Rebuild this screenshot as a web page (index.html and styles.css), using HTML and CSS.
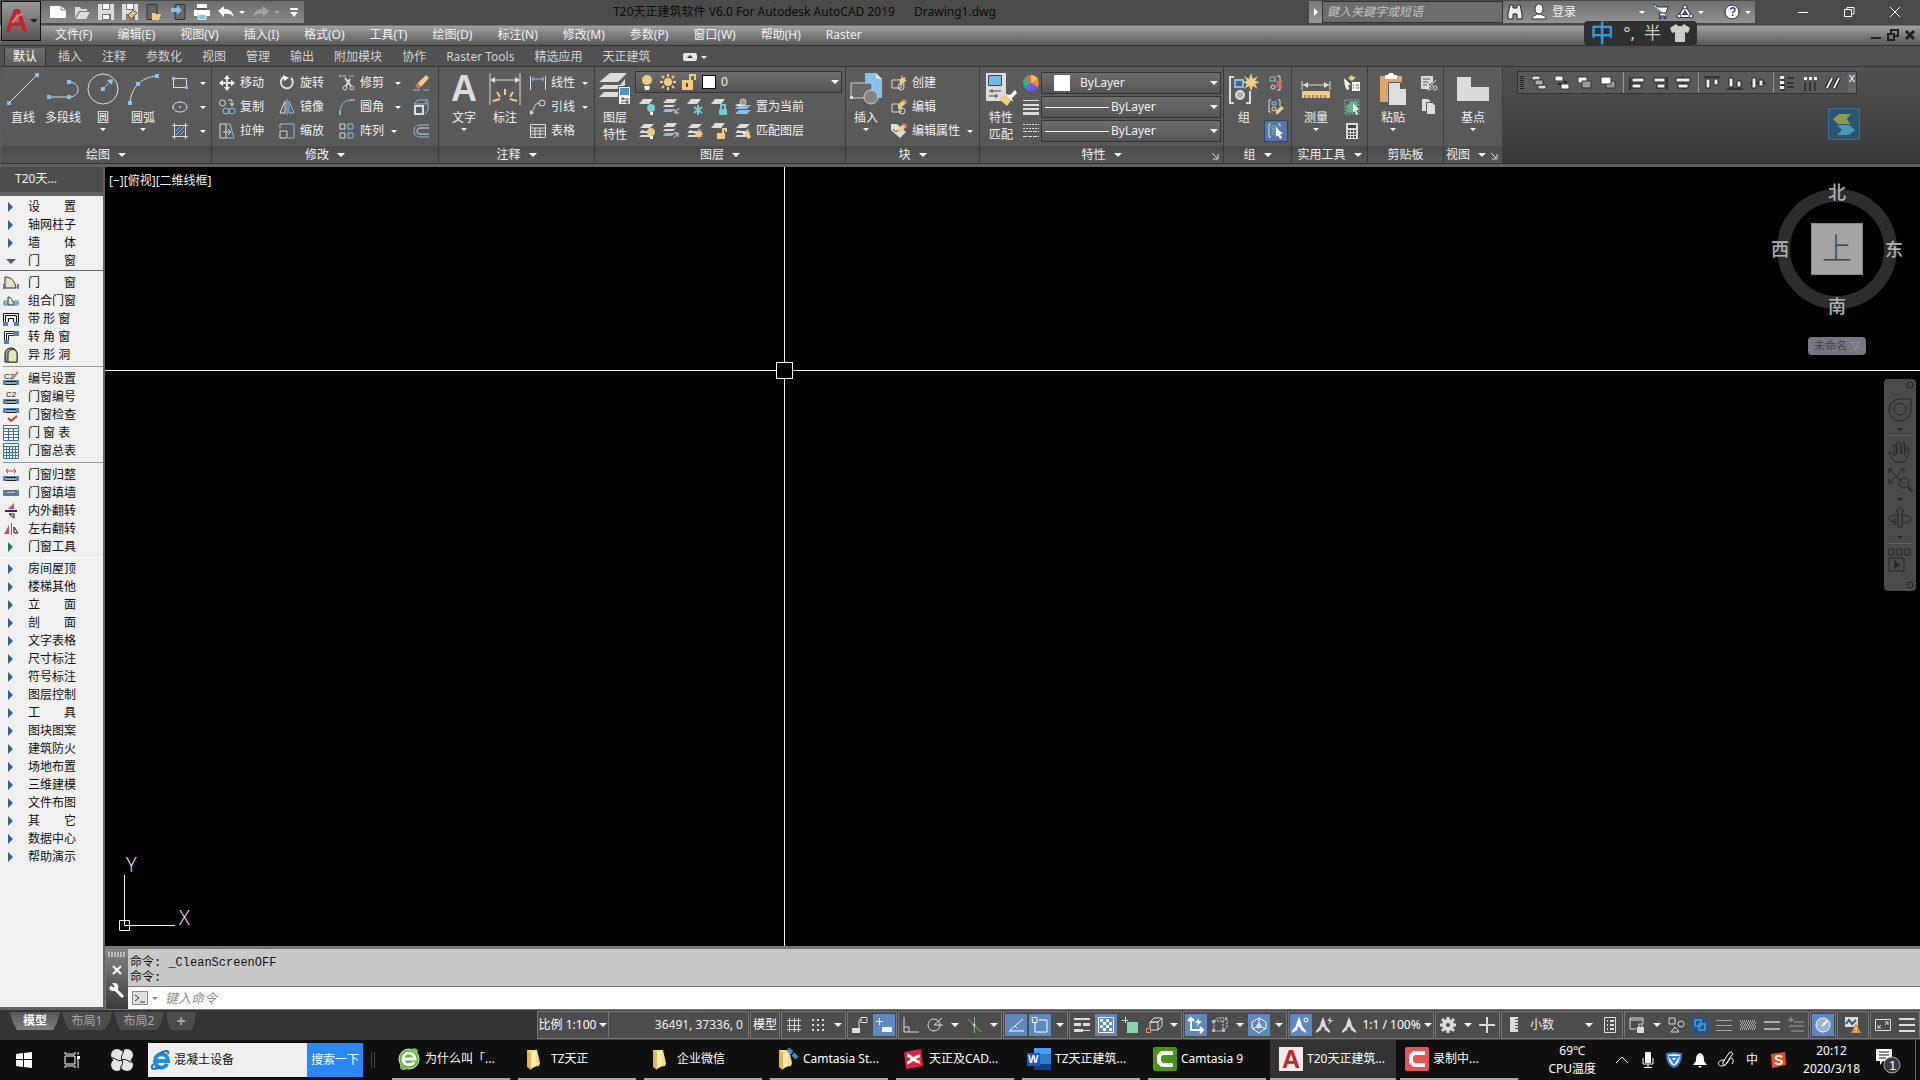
FILE: index.html
```html
<!DOCTYPE html>
<html lang="zh-CN">
<head>
    <meta charset="UTF-8">
    <meta name="viewport" content="width=device-width, initial-scale=1.0">
    <title>T20天正建筑软件 V6.0 For Autodesk AutoCAD 2019</title>
    <link rel="stylesheet" href="styles.css">
</head>
<body>

<!-- Shared shapes -->
<svg class="defs" width="0" height="0">
    <symbol id="layers" viewBox="0 0 16 16"><path class="fw" d="M5 1h10l-4 4H1zM3 7h2l-1 1h7l2-2h1l-4 4H0zM3 11l-1 1h8l3-3h2l-4 5H0z"/></symbol>
    <symbol id="folder" viewBox="0 0 24 24"><path fill="#f9dc83" stroke="none" d="M4 3h10l3 13-1 3-9 1H4z"/><path fill="#e2b753" stroke="none" d="M4 3l4 3v17l-4-3z"/><path fill="#ffedb0" stroke="none" d="M8 6l5-2v15l-5 3z"/></symbol>
    <symbol id="wall" viewBox="0 0 16 6"><path fill="#4f84b5" stroke="none" d="M0 0h16v5H0z"/><path fill="#f0ecb0" stroke="#222" d="M3 1.500h10M3 4.500h10"/><path stroke="#d9d79c" d="M3 3h10"/></symbol>
    <symbol id="person" viewBox="0 0 16 16"><path fill="currentColor" stroke="none" d="M8 0l2 5 1 4 4 5v2l-5-3-1-3H7l-1 3-5 3v-2l4-5 1-4z"/></symbol>
</svg>

<header class="titlebar">
    <button class="app-button" aria-label="应用程序菜单">
        <svg width="26" height="30" viewBox="0 0 26 30"><text class="logo-a" x="1" y="26" font-size="33">A</text><path d="M8 17c5-7 8-9 11-9" stroke="#f27a72" stroke-width="2"/></svg>
        <i class="arr dark"></i>
    </button>
    <div class="quick">
        <button aria-label="新建"><svg class="ic" viewBox="0 0 16 16"><path class="fill" d="M0 2h11l5 4v8H0z"/><path stroke="#777" d="M11 2v4h5"/></svg></button>
        <button aria-label="打开"><svg class="ic" viewBox="0 0 16 16"><path class="fw" d="M1 3h5l1 2h6v2H5L1 14zM6 8h10l-4 7H2z"/></svg></button>
        <button aria-label="保存"><svg class="ic" viewBox="0 0 16 16"><path class="fw" d="M0 0h16v16H0z"/><path fill="#777" stroke="none" d="M4 0h8v6H4zM4 10h9v6H4z"/><path class="fill" d="M5 0h6v5H5zM5 11h6v4H5z"/></svg></button>
        <button aria-label="另存为"><svg class="ic" viewBox="0 0 16 16"><path class="fw" d="M0 0h16v16H0z"/><path fill="#777" stroke="none" d="M4 0h8v6H4zM4 10h9v6H4z"/><path class="fill" d="M5 0h6v5H5z"/><path fill="#f4c070" stroke="#655" d="M6 11l5-5 4 3-6 6z"/><path fill="#e76a66" stroke="none" d="M5 11l3 4-3 1z"/></svg></button>
        <button aria-label="从移动设备打开"><svg class="ic" viewBox="0 0 16 16"><path fill="#666" stroke="#333" d="M1 .5h10v15H1z"/><path class="fy" d="M6 9h3l1 1h5l-2 6H6z"/></svg></button>
        <button aria-label="保存到移动设备"><svg class="ic" viewBox="0 0 16 16"><path fill="#666" stroke="#333" d="M5 .5h10v15H5z"/><path class="fb" d="M1 4h6V1l5 5-5 5V8H1z"/></svg></button>
        <button aria-label="打印"><svg class="ic" viewBox="0 0 16 16"><path class="fill" d="M3 0h10v4H3zM0 6h16v6H0z"/><path fill="#555" stroke="none" d="M3 4h10v2H3z"/><path fill="#7cc3f0" stroke="#eee" d="M4 10.500h8v5H4z"/></svg></button>
        <button class="duo" aria-label="放弃"><svg class="ic" viewBox="0 0 16 16"><path class="fill" d="M0 7l6-5v3c6 0 9 3 10 8-2-3-5-4-10-3v3z"/></svg><i class="arr"></i></button>
        <button class="duo faint" aria-label="重做"><svg class="ic" viewBox="0 0 16 16"><path class="fill" d="M16 7l-6-5v3C4 5 1 8 0 13c2-3 5-4 10-3v3z"/></svg><i class="arr"></i></button>
        <button aria-label="自定义快速访问工具栏"><svg class="ic" viewBox="0 0 16 16"><path class="fill" d="M2 4h8v2H2zM2 8h8l-4 5z"/></svg></button>
    </div>
    <h1>T20天正建筑软件 V6.0 For Autodesk AutoCAD 2019 <span>Drawing1.dwg</span></h1>
    <form class="help-search">
        <button type="button" aria-label="展开"><i class="arr side"></i></button>
        <input type="text" aria-label="搜索" placeholder="鍵入关鍵字或短语">
    </form>
    <div class="account">
        <button aria-label="查找"><svg class="ic" viewBox="0 0 16 16"><path fill="#eee" stroke="#222" d="M3 1h3v3h4V1h3l2 9v5h-5v-5H6v5H1v-5z"/></svg></button>
        <button class="login"><svg class="ic" viewBox="0 0 16 16"><ellipse cx="8" cy="5" rx="4" ry="5" fill="#fff" stroke="#333"/><path fill="#fff" stroke="#333" d="M1 15c0-4 4-3 5-5h4c1 2 5 1 5 5z"/></svg><span>登录</span><i class="arr"></i></button>
        <button aria-label="应用商店"><svg class="ic" viewBox="0 0 16 16"><path fill="#fff" stroke="#1e2c5c" d="M0 1h3l1 2h11l-2 6H6l1 3h7"/><circle cx="7" cy="14" r="1" stroke="#1e2c5c"/><circle cx="12" cy="14" r="1" stroke="#1e2c5c"/></svg></button>
        <button class="duo" aria-label="保持连接"><svg class="ic" viewBox="0 0 16 16"><path d="M8 4l-5 8h10z" stroke="#1e2c5c" stroke-width="4"/><path d="M8 4l-5 8h10z" stroke="#fff" stroke-width="2"/><circle cx="8" cy="3" r="2" fill="#fff" stroke="#1e2c5c"/><circle cx="2" cy="12" r="2" fill="#fff" stroke="#1e2c5c"/><circle cx="14" cy="12" r="2" fill="#fff" stroke="#1e2c5c"/></svg><i class="arr"></i></button>
        <button class="duo help" aria-label="帮助"><svg class="ic" viewBox="0 0 16 16"><circle cx="8" cy="8" r="7" fill="#fff" stroke="#1e2c5c"/><text x="5" y="12" font-size="12" font-weight="bold" fill="#1c4ba0">?</text></svg><i class="arr"></i></button>
    </div>
    <div class="window-buttons">
        <button aria-label="最小化"><svg class="ic" viewBox="0 0 16 16"><path d="M3 8.500h10" stroke="#fff"/></svg></button>
        <button aria-label="还原"><svg class="ic" viewBox="0 0 16 16"><path d="M3.500 5.500h7v7h-7zM6 5V3.500h7V10h-2" stroke="#fff"/></svg></button>
        <button aria-label="关闭"><svg class="ic" viewBox="0 0 16 16"><path d="M3 3l10 10M13 3L3 13" stroke="#fff"/></svg></button>
    </div>
    <div class="ime"><b>中</b><span>°,</span><span>半</span><svg width="20" height="18" viewBox="0 0 20 18"><path fill="#ccc" stroke="none" d="M6 0c2 3 6 3 8 0l6 4-2 5-3-1v10H5V8L2 9 0 4z"/></svg></div>
</header>

<nav class="menubar">
    <a href="#">文件(F)</a><a href="#">编辑(E)</a><a href="#">视图(V)</a><a href="#">插入(I)</a><a href="#">格式(O)</a><a href="#">工具(T)</a><a href="#">绘图(D)</a><a href="#">标注(N)</a><a href="#">修改(M)</a><a href="#">参数(P)</a><a href="#">窗口(W)</a><a href="#">帮助(H)</a><a href="#">Raster</a>
    <div class="doc-buttons">
        <button aria-label="最小化图形"><svg class="ic" viewBox="0 0 16 16"><path d="M3 11h10" stroke="#222" stroke-width="2"/></svg></button>
        <button aria-label="还原图形"><svg class="ic" viewBox="0 0 16 16"><path d="M3 7h6v6H3zM6 6V3h7v6h-3" stroke="#222" stroke-width="2"/></svg></button>
        <button aria-label="关闭图形"><svg class="ic" viewBox="0 0 16 16"><path d="M4 4l8 8M12 4l-8 8" stroke="#222" stroke-width="3"/></svg></button>
    </div>
</nav>

<nav class="tabs">
    <a href="#" class="active">默认</a><a href="#">插入</a><a href="#">注释</a><a href="#">参数化</a><a href="#">视图</a><a href="#">管理</a><a href="#">输出</a><a href="#">附加模块</a><a href="#">协作</a><a href="#">Raster Tools</a><a href="#">精选应用</a><a href="#">天正建筑</a>
    <button class="minimize" aria-label="最小化功能区"><svg width="14" height="10" viewBox="0 0 14 10"><rect x="0" y="1" width="14" height="8" rx="2" fill="#e6e6e6" stroke="none"/><path fill="#333" stroke="none" d="M4 6l3-3 3 3z"/></svg><i class="arr"></i></button>
</nav>

<div class="ribbon">
    <section class="panel draw">
        <div class="panel-body">
            <button class="big"><svg viewBox="0 0 32 32"><path d="M1 31L31 1"/><path class="fb" d="M0 28h4v4H0zM28 0h4v4h-4z"/></svg><span>直线</span></button>
            <button class="big"><svg viewBox="0 0 32 32"><path d="M2 24h20c12 0 12-15 0-15"/><path class="fb" d="M0 22h4v4H0zM20 22h4v4h-4zM20 7h4v4h-4z"/></svg><span>多段线</span></button>
            <button class="big"><svg viewBox="0 0 32 32"><circle cx="16" cy="16" r="15"/><path class="bl" d="M16 16l8-8"/><path class="fb" d="M14 14h4v4h-4zM26 6l-1 6-5-5z"/></svg><span>圆</span><i class="arr"></i></button>
            <button class="big"><svg viewBox="0 0 32 32"><path d="M3 30C4 15 14 4 30 3"/><path class="fb" d="M1 28h4v4H1zM9 9h4v4H9zM28 1h4v4h-4z"/></svg><span>圆弧</span><i class="arr"></i></button>
            <div class="stack">
                <button class="cmd" aria-label="矩形"><svg class="ic" viewBox="0 0 16 16"><path d="M1.500 3.500h13v9h-13z"/><path class="fb" d="M0 2h3v3H0zM13 11h3v3h-3z"/></svg><i class="arr"></i></button>
                <button class="cmd" aria-label="椭圆"><svg class="ic" viewBox="0 0 16 16"><ellipse cx="8" cy="8" rx="7" ry="5"/><path class="fb" d="M7 7h2v2H7zM0 7h2v3H0zM7 2h2v2H7z"/></svg><i class="arr"></i></button>
                <button class="cmd" aria-label="图案填充"><svg class="ic" viewBox="0 0 16 16"><path d="M2.500 0v16M13.500 0v16M0 2.500h16M0 13.500h16"/><path class="bl" d="M4 8l4-4M4 12l8-8M8 12l4-4"/></svg><i class="arr"></i></button>
            </div>
        </div>
        <h2>绘图 <i class="arr wide"></i></h2>
    </section>

    <section class="panel modify">
        <div class="panel-body">
            <div class="stack">
                <button class="cmd"><svg class="ic" viewBox="0 0 16 16"><path stroke-width="2" d="M8 2v12M2 8h12"/><path class="fill" d="M8 0l3 4H5zM8 16l3-4H5zM0 8l4-3v6zM16 8l-4-3v6z"/></svg><span>移动</span></button>
                <button class="cmd"><svg class="ic" viewBox="0 0 16 16"><circle cx="3.500" cy="4" r="3"/><path d="M9 1h4v5M11 4l2 3 2-3"/><circle class="bl" cx="7" cy="12" r="3"/><circle class="bl" cx="13" cy="12" r="3"/></svg><span>复制</span></button>
                <button class="cmd"><svg class="ic" viewBox="0 0 16 16"><path d="M1 1h6v14H1zM4 9h8M9 6l3 3-3 3"/><path class="bl" d="M7 1h4l4 14H7"/></svg><span>拉伸</span></button>
            </div>
            <div class="stack">
                <button class="cmd"><svg class="ic" viewBox="0 0 16 16"><path stroke-width="2" d="M12 3a6 6 0 1 1-7-1"/><path class="fill" d="M4 0l6 3-5 3z"/></svg><span>旋转</span></button>
                <button class="cmd"><svg class="ic" viewBox="0 0 16 16"><path d="M6 2v12H1z"/><path class="bl" d="M10 2v12h5zM8 0v16"/></svg><span>镜像</span></button>
                <button class="cmd"><svg class="ic" viewBox="0 0 16 16"><path class="bl" d="M1 6V1h14v14H9"/><path d="M1 8h7v7H1z"/></svg><span>缩放</span></button>
            </div>
            <div class="stack">
                <button class="cmd"><svg class="ic" viewBox="0 0 16 16"><path stroke-dasharray="3 1" d="M0 1h7"/><path class="bl" d="M10 1h5"/><path stroke-width="2" d="M6 3l6 8M11 4l-4 7"/><circle cx="6" cy="13" r="2"/><circle cx="13" cy="13" r="2"/></svg><span>修剪</span><i class="arr"></i></button>
                <button class="cmd"><svg class="ic" viewBox="0 0 16 16"><path class="bl" d="M1 15c0-8 3-13 10-14"/><path d="M11 1h5M1 12v4"/></svg><span>圆角</span><i class="arr"></i></button>
                <button class="cmd array"><svg class="ic" viewBox="0 0 16 16"><path d="M1 1h5v5H1zM1 10h5v5H1z"/><path class="bl" d="M9 1h5v5H9zM9 10h5v5H9z"/></svg><span>阵列</span><i class="arr"></i></button>
            </div>
            <div class="stack">
                <button class="cmd" aria-label="删除"><svg class="ic" viewBox="0 0 16 16"><path class="fy" d="M4 9l9-9 3 3-8 9z"/><path class="fr" d="M2 11l3-3 3 4-3 2z"/><path class="bl" d="M0 15h7M10 15h6"/></svg></button>
                <button class="cmd" aria-label="分解"><svg class="ic" viewBox="0 0 16 16"><path stroke-width="2" d="M2 7h8v8H2z"/><path class="bl" d="M1 5l4-4h10L11 5zM12 6l3-3v8l-3 4"/></svg></button>
                <button class="cmd" aria-label="偏移"><svg class="ic" viewBox="0 0 16 16"><path class="bl" d="M16 2H7C-1 2-1 14 7 14h9"/><path d="M16 5H7c-4 0-4 6 0 6h9"/></svg></button>
            </div>
        </div>
        <h2>修改 <i class="arr wide"></i></h2>
    </section>

    <section class="panel annotate">
        <div class="panel-body">
            <button class="big"><svg viewBox="0 0 32 32"><text class="letter" x="3" y="28" font-size="36">A</text></svg><span>文字</span><i class="arr"></i></button>
            <button class="big"><svg viewBox="0 0 32 32"><path d="M1 0v32M31 0v32M2 7h28"/><path class="fw" d="M1 7l5-3v6zM31 7l-5-3v6z"/><path stroke="#f4cd7a" stroke-width="2" d="M16 16v6M8 19l3 5M24 19l-3 5M4 28l7-2M28 28l-7-2"/></svg><span>标注</span></button>
            <div class="stack">
                <button class="cmd"><svg class="ic" viewBox="0 0 16 16"><path d="M.5 1v14M15.500 1v14"/><path class="bl" d="M2 4h12M4 2L2 4l2 2M12 2l2 2-2 2"/></svg><span>线性</span><i class="arr"></i></button>
                <button class="cmd"><svg class="ic" viewBox="0 0 16 16"><circle cx="12" cy="4" r="3"/><path d="M9 4C4 4 5 10 1 14"/><path class="fw" d="M0 16v-5l4 3z"/></svg><span>引线</span><i class="arr"></i></button>
                <button class="cmd"><svg class="ic" viewBox="0 0 16 16"><path d="M.5 1.500h15v13H.5zM0 5h16M0 8h16M0 11h16M5 5v10M10 5v10"/></svg><span>表格</span></button>
            </div>
        </div>
        <h2>注释 <i class="arr wide"></i></h2>
    </section>

    <section class="panel layer">
        <div class="panel-body">
            <button class="big"><svg viewBox="0 0 32 32"><path class="fw" d="M11 0h17l-9 9H0zM5 12h16l5-6v6l-5 4H0zM5 19h14v5H0z"/><path fill="#fff" stroke="#555" d="M19.500 13.500h12v18h-12z"/><path fill="#4b93cc" stroke="none" d="M21 15h9v7h-9z"/><path stroke="#444" d="M22 26h8M22 29h8M24 24v3M28 27v4"/></svg><span>图层<br>特性</span></button>
            <div class="layer-tools">
                <div class="combo">
                    <svg class="ic" viewBox="0 0 16 16"><circle cx="8" cy="6" r="5" class="fy"/><path class="fill" d="M5 12h6l-1 4H6z"/></svg>
                    <svg class="ic" viewBox="0 0 16 16"><circle cx="8" cy="8" r="4" class="fy"/><path stroke="#f4cd7a" stroke-width="2" d="M8 0v3M8 13v3M0 8h3M13 8h3M2 2l2 2M12 12l2 2M14 2l-2 2M4 12l-2 2"/></svg>
                    <svg class="ic" viewBox="0 0 16 16"><path class="fy" d="M1 6h11v10H1z"/><path stroke="#f4cd7a" stroke-width="2" d="M9 6V1h5v5"/><path stroke="#733" stroke-width="2" d="M6 9v4"/></svg>
                    <i class="swatch"></i>
                    <select aria-label="图层"><option>0</option></select>
                    <i class="arr wide"></i>
                </div>
                <div class="layer-row">
                    <button aria-label="关"><svg class="ic" viewBox="0 0 16 16"><path class="fw" d="M4 0h10l-4 5H0z"/><circle class="ft" cx="12" cy="9" r="4"/><path class="fill" d="M11 13h3v3h-3z"/></svg></button>
                    <button aria-label="隔离"><svg class="ic" viewBox="0 0 16 16"><path class="fw" d="M4 0h10l-3 4H0zM2 6h9l2-1-3 3H0z"/><path class="fb" d="M2 10h10l-3 3H0z"/><path d="M16 9l-4 5M12 10v4h4"/></svg></button>
                    <button aria-label="冻结"><svg class="ic" viewBox="0 0 16 16"><path class="fw" d="M4 0h10l-4 5H0z"/><path stroke="#6cd0d2" stroke-width="2" d="M11 6v10M7 8l8 6M15 8l-8 6"/></svg></button>
                    <button aria-label="锁定"><svg class="ic" viewBox="0 0 16 16"><path class="fw" d="M4 0h10l-4 5H0z"/><path class="ft" d="M8 10h8v6H8z"/><path stroke="#6cd0d2" stroke-width="2" d="M10 10V6h4v4"/></svg></button>
                    <button class="cmd"><svg class="ic" viewBox="0 0 16 16"><path class="fb" d="M4 6h12l-4 4H0zM4 11h12l-4 4H0z"/><path class="fw" d="M2 5h9l-2 2H0z"/><circle cx="8" cy="3" r="3" fill="#999" stroke="#ccc"/></svg><span>置为当前</span></button>
                </div>
                <div class="layer-row">
                    <button aria-label="打开所有图层"><svg class="ic" viewBox="0 0 16 16"><use href="#layers"/><circle class="fy" cx="12" cy="9" r="4"/><path class="fill" d="M11 13h3v3h-3z"/></svg></button>
                    <button aria-label="取消隔离"><svg class="ic" viewBox="0 0 16 16"><path class="fw" d="M4 0h10l-3 4H0zM2 6h9l2-1-3 3H0z"/><path class="fb" d="M2 10h10l-3 3H0z"/><path d="M11 15l4-5M11 10h4v4"/></svg></button>
                    <button aria-label="解冻所有图层"><svg class="ic" viewBox="0 0 16 16"><use href="#layers"/><circle cx="12" cy="11" r="3" class="fy"/><path stroke="#f4cd7a" d="M12 6v10M7 11h9M9 8l6 6M15 8l-6 6"/></svg></button>
                    <button aria-label="解锁"><svg class="ic" viewBox="0 0 16 16"><path class="fw" d="M4 0h10l-4 5H0z"/><path class="fy" d="M6 10h8v6H6z"/><path stroke="#f4cd7a" stroke-width="2" d="M12 10V6h3v3"/></svg></button>
                    <button class="cmd"><svg class="ic" viewBox="0 0 16 16"><use href="#layers"/><path class="fy" d="M9 9l4-2 3 7-3 2z"/><path fill="#fff" stroke="none" d="M8 8l3 3-2 1-3-3z"/></svg><span>匹配图层</span></button>
                </div>
            </div>
        </div>
        <h2>图层 <i class="arr wide"></i></h2>
    </section>

    <section class="panel block">
        <div class="panel-body">
            <button class="big"><svg viewBox="0 0 32 32"><path class="fb" d="M15 0h11l6 6v19H15z"/><path fill="#cde6fa" stroke="none" d="M26 0v6h6z"/><path fill="#686868" stroke="#ccc" d="M1 10h21v15H1z"/><circle cx="21" cy="24" r="7" fill="#868686" stroke="#ccc"/><path class="fw" d="M0 23h3v3H0z"/></svg><span>插入</span><i class="arr"></i></button>
            <div class="stack">
                <button class="cmd"><svg class="ic" viewBox="0 0 16 16"><path d="M1 5h9v8H1z"/><circle cx="10" cy="12" r="3"/><path class="fy" d="M11 0l1 3 3-1-1 3 2 1-3 1 1 3-3-2-3 1 1-3-2-2 3 0z"/></svg><span>创建</span></button>
                <button class="cmd"><svg class="ic" viewBox="0 0 16 16"><path d="M1 5h9v8H1z"/><circle cx="11" cy="12" r="3"/><path class="fy" d="M7 6l6-6 3 3-6 6-3 1z"/><path class="fr" d="M13 0l3 3-2 1-3-3z"/></svg><span>编辑</span></button>
                <button class="cmd"><svg class="ic" viewBox="0 0 16 16"><path class="fw" d="M0 1h6l9 8-6 6L0 7z"/><path stroke="#555" d="M2 6l3 3 4-4"/><path class="fy" d="M7 6l6-6 3 3-6 6-3 1z"/><path class="fr" d="M13 0l3 3-2 1-3-3z"/></svg><span>编辑属性</span><i class="arr"></i></button>
            </div>
        </div>
        <h2>块 <i class="arr wide"></i></h2>
    </section>

    <section class="panel props">
        <div class="panel-body">
            <button class="big"><svg viewBox="0 0 32 32"><path class="fw" d="M1 0h20v28H1z"/><path fill="#71b7e8" stroke="#444" d="M3.500 2.500h13v10h-13z"/><path stroke="#444" d="M4 18h12M4 23h9M7 16v4M11 21v4"/><path class="fy" d="M14 26l6-5 7 5-5 7z"/><path class="fill" d="M20 21l5 1 5-5 2 3-5 5 1 4z"/></svg><span>特性<br>匹配</span></button>
            <div class="stack icons">
                <i class="color-wheel"></i>
                <svg class="ic" viewBox="0 0 16 16"><path class="fw" d="M0 1h16v1H0zM0 5h16v2H0zM0 9h16v2H0zM0 13h16v3H0z"/></svg>
                <svg class="ic" viewBox="0 0 16 16"><path stroke-dasharray="2 1" d="M0 1.500h16M0 5.500h16"/><path stroke-dasharray="4 1" d="M0 8.500h16M0 13.500h16"/></svg>
            </div>
            <div class="stack combos">
                <div class="combo color"><i class="swatch"></i><select aria-label="对象颜色"><option>ByLayer</option></select><i class="arr wide"></i></div>
                <div class="combo"><i class="rule"></i><select aria-label="线宽"><option>ByLayer</option></select><i class="arr wide"></i></div>
                <div class="combo"><i class="rule"></i><select aria-label="线型"><option>ByLayer</option></select><i class="arr wide"></i></div>
            </div>
        </div>
        <h2>特性 <i class="arr wide"></i><svg class="launcher" viewBox="0 0 8 8"><path d="M1 1l5 5M7 2v5H2"/></svg></h2>
    </section>

    <section class="panel group">
        <div class="panel-body">
            <button class="big"><svg viewBox="0 0 32 32"><path stroke-width="2" d="M6 4H2v26h4M18 30h4V18"/><path fill="#47687f" stroke="#7db9e8" stroke-width="2" d="M7 7h8v7H7z"/><circle cx="12" cy="22" r="4" fill="#aaa" stroke-width="2"/><path class="fy" d="M23 0l2 6 5-3-3 5 5 1-5 2 3 5-5-3-2 5-2-5-5 3 3-5-5-2 5-1-3-5 5 3z"/></svg><span>组</span></button>
            <div class="stack">
                <button class="tool" aria-label="解除编组"><svg class="ic" viewBox="0 0 16 16"><path class="bl" d="M2 2h5v4H2z"/><circle cx="5" cy="12" r="2"/><path d="M9 1h3v14H9"/><path stroke="#ee5a55" stroke-width="2" d="M8 6l6 6M14 6l-6 6"/></svg></button>
                <button class="tool" aria-label="组编辑"><svg class="ic" viewBox="0 0 16 16"><path d="M3 1H1v12h2M10 1h2v6"/><path class="bl" d="M4 3h4v3H4z"/><circle cx="6" cy="10" r="2"/><path class="fy" d="M8 12l5-5 3 2-5 5-3 2z"/></svg></button>
                <button class="tool on" aria-label="启用编组选择"><svg class="ic" viewBox="0 0 16 16"><path d="M3 1H1v13h2M10 1h2v3"/><path stroke="#67c69b" d="M4 3h4v3H4z"/><circle stroke="#67c69b" cx="6" cy="10" r="2"/><path class="fill" d="M8 4l7 7h-3l2 4-2 1-2-4-2 2z"/></svg></button>
            </div>
        </div>
        <h2>组 <i class="arr wide"></i></h2>
    </section>

    <section class="panel utils">
        <div class="panel-body">
            <button class="big"><svg viewBox="0 0 32 32"><path d="M2 8v9M30 8v9M3 12h26"/><path class="fw" d="M3 12l5-3v6zM29 12l-5-3v6z"/><path class="fy" d="M2 18h28v7H2z"/><path stroke="#555" d="M5 22v3M9 22v3M13 22v3M17 22v3M21 22v3M25 22v3"/></svg><span>测量</span><i class="arr"></i></button>
            <div class="stack">
                <button class="tool" aria-label="快速选择"><svg class="ic" viewBox="0 0 16 16"><path class="fill" d="M0 3l7 7H4l1 4-2 1-2-4zM8 7h8v9H8z"/><path class="fy" d="M8 0l1 2h3l-4 4-4-3z"/><path stroke="#256ea8" d="M9 10h1M12 10h3M9 13h1M12 13h3"/></svg></button>
                <button class="tool" aria-label="全部选择"><svg class="ic" viewBox="0 0 16 16"><path stroke="#67c69b" stroke-dasharray="2 1" d="M1 1h14v14H1z"/><path fill="#67a884" stroke="#67c69b" d="M3 6h7v7H3zM6 3h7v7H6z"/><path class="fill" d="M9 4l6 7h-3l2 4-2 1-1-4-2 1z"/></svg></button>
                <button class="tool" aria-label="计算器"><svg class="ic" viewBox="0 0 16 16"><path class="fw" d="M2 0h12v16H2z"/><path fill="#444" stroke="none" d="M4 2h8v3H4zM4 7h2v2H4zM7 7h2v2H7zM10 7h2v2h-2zM4 10h2v2H4zM7 10h2v2H7zM10 10h2v2h-2zM4 13h2v2H4zM7 13h2v2H7zM10 13h2v2h-2z"/></svg></button>
            </div>
        </div>
        <h2>实用工具 <i class="arr wide"></i></h2>
    </section>

    <section class="panel clip">
        <div class="panel-body">
            <button class="big"><svg viewBox="0 0 32 32"><path fill="#dca66b" stroke="none" d="M3 3h22v26H3z"/><path class="fill" d="M8 2h3l1-2h4l1 2h3v4H8z"/><path fill="#ddd" stroke="#5b5b5b" d="M11.500 9.500h12l6 6v17h-18z"/><path fill="#5b5b5b" stroke="none" d="M23 9v7h7z"/></svg><span>粘贴</span><i class="arr"></i></button>
            <div class="stack">
                <button class="tool" aria-label="剪切"><svg class="ic" viewBox="0 0 16 16"><path class="fw" d="M0 1h12v6l-4 2v5H0z"/><path stroke="#555" d="M2 4h7M2 7h6M2 10h4"/><path d="M6 5l7 7M15 5l-7 7"/><circle cx="8" cy="13" r="2"/><circle cx="14" cy="13" r="2"/></svg></button>
                <button class="tool" aria-label="复制剪裁"><svg class="ic" viewBox="0 0 16 16"><path class="fw" d="M1 0h6l2 2v2H5v8H1z"/><path fill="#ddd" stroke="#5b5b5b" d="M5.500 3.500h6l3 3v9h-9z"/></svg></button>
            </div>
        </div>
        <h2>剪贴板</h2>
    </section>

    <section class="panel view">
        <div class="panel-body">
            <button class="big"><svg viewBox="0 0 32 32"><path class="fw" d="M0 4h14v10h18v14H0z"/></svg><span>基点</span><i class="arr"></i></button>
        </div>
        <h2>视图 <i class="arr wide"></i><svg class="launcher" viewBox="0 0 8 8"><path d="M1 1l5 5M7 2v5H2"/></svg></h2>
    </section>

    <div class="ribbon-rest">
        <div class="align-bar">
            <i class="grip"></i>
            <button aria-label="前置"><svg class="ic" viewBox="0 0 16 16"><path fill="#ddd" stroke="#333" d="M1 1h8v4H1zM7 10h8v4H7z"/><path fill="#aaa" stroke="#333" d="M4 5h8v5H4z"/></svg></button>
            <button aria-label="后置"><svg class="ic" viewBox="0 0 16 16"><path fill="#fff" stroke="#333" d="M1 1h8v5H1zM7 9h8v5H7z"/><path fill="#222" stroke="none" d="M4 8h3v2H4zM10 6h3v2h-3z"/></svg></button>
            <button aria-label="置于对象之上"><svg class="ic" viewBox="0 0 16 16"><path fill="#fff" stroke="#333" d="M1 2h9v6H1z"/><path fill="#999" stroke="#333" d="M5 6h9v7H5z"/></svg></button>
            <button aria-label="置于对象之下"><svg class="ic" viewBox="0 0 16 16"><path fill="#999" stroke="#333" d="M6 6h9v7H6z"/><path fill="#fff" stroke="#333" d="M1 2h10v7H1z"/></svg></button>
            <button class="sep" aria-label="左对齐"><svg class="ic" viewBox="0 0 16 16"><path stroke="#111" d="M1 2v13"/><path fill="#eee" stroke="#222" d="M3 3h12v4H3zM3 9h9v4H3z"/></svg></button>
            <button aria-label="右对齐"><svg class="ic" viewBox="0 0 16 16"><path stroke="#111" d="M15 2v13"/><path fill="#eee" stroke="#222" d="M2 3h11v4H2zM5 9h8v4H5z"/></svg></button>
            <button aria-label="水平居中"><svg class="ic" viewBox="0 0 16 16"><path stroke="#111" d="M8 1v14"/><path fill="#eee" stroke="#222" d="M1 3h14v4H1zM3 9h10v4H3z"/></svg></button>
            <button class="sep" aria-label="顶端对齐"><svg class="ic" viewBox="0 0 16 16"><path stroke="#111" d="M0 2h16"/><path fill="#eee" stroke="#222" d="M2 4h4v9H2zM10 4h4v6h-4z"/></svg></button>
            <button aria-label="底端对齐"><svg class="ic" viewBox="0 0 16 16"><path stroke="#111" d="M0 14h16"/><path fill="#eee" stroke="#222" d="M2 3h4v9H2zM10 6h4v6h-4z"/></svg></button>
            <button aria-label="垂直居中"><svg class="ic" viewBox="0 0 16 16"><path stroke="#111" d="M0 8h16"/><path fill="#eee" stroke="#222" d="M2 3h4v10H2zM9 5h4v6H9z"/></svg></button>
            <button class="sep" aria-label="纵向分布"><svg class="ic" viewBox="0 0 16 16"><path fill="#eee" stroke="none" d="M1 1h4v3H1zM1 6h4v3H1zM1 11h4v3H1z"/><path stroke="#111" d="M2 5h4M2 10h4M2 15h4M8 3h7M8 8h7M8 12h7"/></svg></button>
            <button aria-label="横向分布"><svg class="ic" viewBox="0 0 16 16"><path fill="#eee" stroke="none" d="M2 2h3v3H2zM7 2h3v3H7zM12 2h3v3h-3z"/><path stroke="#111" d="M3 7v9M8 7v9M13 7v9"/></svg></button>
            <button aria-label="平行"><svg class="ic" viewBox="0 0 16 16"><path stroke="#111" stroke-width="4" d="M2 13L7 3M9 13l5-10"/><path stroke="#eee" stroke-width="2" d="M2 13L7 3M9 13l5-10"/></svg></button>
            <button class="close" aria-label="关闭工具栏">x</button>
        </div>
        <svg class="s-logo" viewBox="0 0 32 32"><path fill="#2a5674" stroke="#3a7193" d="M.5.5h31v31H.5z"/><path fill="#8c9c45" stroke="none" d="M11 6h12l-4 5 3 5H10l-5-5z"/><path fill="#4b97b8" stroke="none" d="M9 17h12l6 5-6 5H9l5-5z"/></svg>
    </div>
</div>

<div class="workspace">
    <aside class="palette">
        <h2>T20天...</h2>
        <div class="menu-list">
            <a href="#"><i class="tri"></i>设　　置</a>
            <a href="#"><i class="tri"></i>轴网柱子</a>
            <a href="#"><i class="tri"></i>墙　　体</a>
            <a href="#" class="open"><i class="tri down"></i>门　　窗</a>
            <a href="#" class="after-open"><svg class="ic" viewBox="0 0 16 16"><path fill="#e8e5b5" stroke="#234" d="M2 13V2c7 0 10 5 11 11z"/><path fill="#4f84b5" stroke="none" d="M0 9h2v5H0zM14 9h2v5h-2z"/></svg>门　　窗</a>
            <a href="#"><svg class="ic" viewBox="0 0 16 16"><path fill="#e8e5b5" stroke="#234" d="M5 12V4c3 0 5 4 6 8z"/><path stroke="#3a79aa" d="M1 8h4v4H1zM11 8h4v4h-4zM1 10h4M11 10h4"/></svg>组合门窗</a>
            <a href="#"><svg class="ic" viewBox="0 0 16 16"><path stroke="#111" d="M.5 11V2.500h15V11M2.500 11V4.500h11V11M5.500 11V7.500h5V11"/><path fill="#4f84b5" stroke="none" d="M0 11h5v4H0zM11 11h5v4h-5z"/></svg>带 形 窗</a>
            <a href="#"><svg class="ic" viewBox="0 0 16 16"><path stroke="#222" d="M1.500 11V2.500H12M3.500 11V4.500H12M5.500 11V6.500H12"/><path fill="#4f84b5" stroke="none" d="M11 2h5v5h-5zM1 11h5v4H1z"/></svg>转 角 窗</a>
            <a href="#"><svg class="ic" viewBox="0 0 16 16"><path fill="#999" stroke="#111" d="M2 15V7c0-8 12-8 12 0v8z"/><path fill="#e8e5b5" stroke="#333" d="M5 15V7c0-6 9-6 9 0v8z"/></svg>异 形 洞</a>
            <hr>
            <a href="#"><svg class="ic" viewBox="0 0 16 16"><text x="1" y="8" font-size="8" fill="#111">C2</text><path stroke="#b09030" stroke-width="2" d="M15 1l-5 6"/><use href="#wall" y="9" width="16" height="6"/></svg>编号设置</a>
            <a href="#"><svg class="ic" viewBox="0 0 16 16"><text x="3" y="8" font-size="8" fill="#111">C2</text><use href="#wall" y="10" width="16" height="6"/></svg>门窗编号</a>
            <a href="#"><svg class="ic" viewBox="0 0 16 16"><use href="#wall" y="1" width="16" height="6"/><path stroke="#d03a25" stroke-width="2" d="M5 11l3 3 6-5"/></svg>门窗检查</a>
            <a href="#"><svg class="ic" viewBox="0 0 16 16"><path fill="#fff" stroke="#3b71ad" d="M.5.5h15v15H.5zM0 3.500h16M0 6.500h16M0 9.500h16M0 12.500h16M5.500 3v13M10.500 3v13"/></svg>门 窗 表</a>
            <a href="#"><svg class="ic" viewBox="0 0 16 16"><path fill="#fff" stroke="#3b71ad" d="M.5.5h15v15H.5zM0 3.500h16M0 6.500h16M0 9.500h16M0 12.500h16M3.500 3v13M6.500 3v13M9.500 3v13M12.500 3v13"/></svg>门窗总表</a>
            <hr>
            <a href="#"><svg class="ic" viewBox="0 0 16 16"><path stroke="#d03a25" d="M3 4h10M5 2L3 4l2 2M11 2l2 2-2 2"/><use href="#wall" y="9" width="16" height="6"/></svg>门窗归整</a>
            <a href="#"><svg class="ic" viewBox="0 0 16 16"><path fill="#4f84b5" stroke="none" d="M0 5h16v6H0z"/><path fill="#a9b3c9" stroke="#555" d="M3 6h10v3H3z"/></svg>门窗填墙</a>
            <a href="#"><svg class="ic" viewBox="0 0 16 16"><path fill="#e04a4f" stroke="none" d="M11 0v6H5z"/><path stroke="#3c1c9c" stroke-width="2" d="M2 8h12"/><path stroke="#111" d="M6 11h5v4z"/></svg>内外翻转</a>
            <a href="#"><svg class="ic" viewBox="0 0 16 16"><path fill="#e04a4f" stroke="none" d="M6 4v9H1z"/><path stroke="#4d6fb2" d="M8.500 2v12"/><path stroke="#111" d="M11 6v6h4z"/></svg>左右翻转</a>
            <a href="#"><i class="tri green"></i>门窗工具</a>
            <hr class="light">
            <a href="#"><i class="tri"></i>房间屋顶</a>
            <a href="#"><i class="tri"></i>楼梯其他</a>
            <a href="#"><i class="tri"></i>立　　面</a>
            <a href="#"><i class="tri"></i>剖　　面</a>
            <a href="#"><i class="tri"></i>文字表格</a>
            <a href="#"><i class="tri"></i>尺寸标注</a>
            <a href="#"><i class="tri"></i>符号标注</a>
            <a href="#"><i class="tri"></i>图层控制</a>
            <a href="#"><i class="tri"></i>工　　具</a>
            <a href="#"><i class="tri"></i>图块图案</a>
            <a href="#"><i class="tri"></i>建筑防火</a>
            <a href="#"><i class="tri"></i>场地布置</a>
            <a href="#"><i class="tri"></i>三维建模</a>
            <a href="#"><i class="tri"></i>文件布图</a>
            <a href="#"><i class="tri"></i>其　　它</a>
            <a href="#"><i class="tri"></i>数据中心</a>
            <a href="#"><i class="tri"></i>帮助演示</a>
        </div>
    </aside>

    <main>
        <div class="canvas">
            <p class="view-label">[−][俯视][二维线框]</p>
            <i class="cross-v"></i><i class="cross-h"></i><i class="pickbox"></i>
            <svg class="ucs" width="90" height="80" viewBox="0 0 90 80"><path d="M15.500 20v50.500H66M10.500 65.500h10v10h-10z"/><text x="17" y="17" font-size="20">Y</text><text x="70" y="70" font-size="20">X</text></svg>
            <div class="viewcube">
                <i class="ring"></i>
                <span class="north">北</span><span class="west">西</span><b>上</b><span class="east">东</span><span class="south">南</span>
            </div>
            <button class="ucs-name">未命名 <i>▽</i></button>
            <div class="navbar">
                <svg viewBox="0 0 32 212"><circle cx="26" cy="6" r="3"/><circle cx="26" cy="206" r="3"/><path d="M16 20h11v10a11 11 0 1 1-11-10z"/><circle cx="16" cy="30" r="6"/><path stroke="#666" d="M4 56.500h24M4 164.500h24"/><path class="fk" d="M13 49h6l-3 3zM13 119h6l-3 3zM13 157h6l-3 3z"/><path d="M11 83c-3-5-7-8-6-10s5 3 6 4l-2-11c1-2 3-1 3 1l1 8V63c1-2 3-1 3 0l1 12 2-11c1-1 3 0 2 2l-1 10 3-7c1-2 3 0 2 1-2 9-4 14-6 13z"/><path d="M5 90l14 14M20 90L5 104M5 94v-4h4M16 90h4v4M5 100v4h4"/><circle cx="20" cy="104" r="5"/><path stroke-width="2" d="M24 108l4 4"/><path d="M14 148v-16h-2l4-4 4 4h-2v16zM14 136c-6 0-9 2-9 4s4 3 8 3M18 136c5 0 9 2 9 4s-4 4-8 4M12 140l-4 3 4 3M5 170h5v6H5zM13 170h5v6h-5zM21 170h5v6h-5zM5 179h15v13H5z"/><path class="fk" d="M10 181v9l6-4z"/></svg>
            </div>
        </div>
        <div class="command">
            <div class="command-side">
                <i class="dots"></i>
                <button aria-label="关闭命令行"><svg class="ic" viewBox="0 0 16 16"><path stroke="#fff" stroke-width="2" d="M4 4l8 8M12 4l-8 8"/></svg></button>
                <button aria-label="自定义"><svg class="ic" viewBox="0 0 16 16"><path stroke="#fff" stroke-width="3" d="M5 5l9 9"/><path stroke="#fff" stroke-width="2" d="M2 4l3 2 2-2-2-3c5 0 4 6 0 6S1 5 2 4z"/></svg></button>
            </div>
            <div class="command-main">
                <p>命令: _CleanScreenOFF<br>命令:</p>
                <div class="command-line">
                    <button aria-label="最近使用的命令"><svg class="ic" viewBox="0 0 16 16"><path fill="#dde0e4" stroke="#888" d="M.5 1.500h15v13H.5z"/><path stroke="#333" d="M3 5l4 3-4 3M8 12h5"/></svg><i class="arr gray"></i></button>
                    <input type="text" aria-label="命令" placeholder="键入命令">
                </div>
            </div>
        </div>
    </main>
</div>

<div class="bottom-bar">
    <div class="layouts"><button class="active">模型</button><button>布局1</button><button>布局2</button><button class="plus">+</button></div>
    <div class="status">
        <div class="sg"><button class="txt plot">比例 1:100 <i class="arr wide"></i></button><span class="coords">36491, 37336, 0</span></div>
        <div class="sg"><button class="txt">模型</button></div>
        <div class="sg">
            <button aria-label="栅格"><svg class="ic" viewBox="0 0 16 16"><path d="M3.500 1v14M8.500 1v14M12.500 1v14M1 3.500h14M1 8.500h14M1 12.500h14"/></svg></button>
            <button aria-label="捕捉"><svg class="ic" viewBox="0 0 16 16"><path stroke-width="2" stroke-dasharray="2 3" d="M2 3h12M2 8h12M2 13h12"/></svg></button>
            <button class="drop" aria-label="捕捉设置"><i class="arr wide"></i></button>
        </div>
        <div class="sg">
            <button aria-label="推断约束"><svg class="ic" viewBox="0 0 16 16"><path d="M9 .5h6v5H9zM9 3H7v8"/><path class="fw" d="M0 11h8v5H0z"/></svg></button>
            <button class="on" aria-label="动态输入"><svg class="ic" viewBox="0 0 16 16"><path stroke="#fff" d="M3.500 1v7M0 4.500h7"/><path class="fill" d="M6 10h10v5H6z"/></svg></button>
        </div>
        <div class="sg">
            <button aria-label="正交"><svg class="ic" viewBox="0 0 16 16"><path d="M1 0v15h15M1 10h5v5"/></svg></button>
            <button aria-label="极轴追踪"><svg class="ic" viewBox="0 0 16 16"><circle cx="7" cy="8" r="6"/><path d="M7 8l8-7M7 8h9"/></svg></button>
            <button class="drop" aria-label="极轴设置"><i class="arr wide"></i></button>
            <button aria-label="等轴测草图"><svg class="ic" viewBox="0 0 16 16"><path stroke="#e57a7a" d="M2 2l13 13"/><path stroke="#6c9" d="M8.500 0v16"/><circle cx="8" cy="8" r="1"/></svg></button>
            <button class="drop" aria-label="等轴测设置"><i class="arr wide"></i></button>
        </div>
        <div class="sg">
            <button class="on" aria-label="对象捕捉追踪"><svg class="ic" viewBox="0 0 16 16"><path stroke="#fff" d="M15 2L1 14h15M7 9l3 3"/></svg></button>
            <button class="on" aria-label="对象捕捉"><svg class="ic" viewBox="0 0 16 16"><path stroke="#fff" d="M3 6v9h12V3H7M0 .5h5v5H.5z"/></svg></button>
            <button class="drop" aria-label="对象捕捉设置"><i class="arr wide"></i></button>
        </div>
        <div class="sg">
            <button aria-label="线宽"><svg class="ic" viewBox="0 0 16 16"><path class="fw" d="M0 1h16v2H0zM0 6h7v3H0zM9 6h7v3H9zM0 12h9v3H0zM9 13h7v1H9z"/></svg></button>
            <button class="on" aria-label="透明度"><svg class="ic" viewBox="0 0 16 16"><path stroke="#fff" d="M.5.5h15v15H.5z"/><path stroke="#fff" stroke-width="3" stroke-dasharray="3 3" d="M2 3.500h12M2 9.500h12"/><path stroke="#fff" stroke-width="3" stroke-dasharray="3 3" d="M5 6.500h9M5 12.500h9"/></svg></button>
            <button aria-label="选择循环"><svg class="ic" viewBox="0 0 16 16"><path class="green" d="M5 5h11v11H5z"/><path d="M3.500 0v6M0 3.500h6"/></svg></button>
            <button aria-label="三维对象捕捉"><svg class="ic" viewBox="0 0 16 16"><path d="M4 5l4-4h8l-4 4zM4 5v7M4 5h8v8H5M12 13l4-4V1"/><path stroke="#e09a70" d="M.5 11.500h4v4h-4z"/></svg></button>
            <button class="drop" aria-label="三维捕捉设置"><i class="arr wide"></i></button>
        </div>
        <div class="sg">
            <button class="on" aria-label="动态UCS"><svg class="ic" viewBox="0 0 16 16"><path stroke="#fff" stroke-width="2" d="M3 1v12h12M0 4l3-3 3 3M12 10l3 3-3 3"/><path class="fill" d="M11 1L7 6h3l-2 4 6-6h-3z"/></svg></button>
            <button aria-label="选择过滤"><svg class="ic" viewBox="0 0 16 16"><path stroke-dasharray="2 1" d="M2 4l4-3h9v9l-4 4H2zM2 4h9v10M11 4l4-3"/><path class="fb" d="M0 3h3v3H0zM0 12h3v3H0zM10 12h3v3h-3z"/></svg></button>
            <button class="drop" aria-label="过滤设置"><i class="arr wide"></i></button>
            <button class="on" aria-label="小控件"><svg class="ic" viewBox="0 0 16 16"><path stroke="#fff" d="M8 1l7 4v6l-7 5-7-5V5zM8 1v8M1 12l7-3 7 3"/><circle cx="8" cy="9" r="2" stroke="#fff"/></svg></button>
            <button class="drop" aria-label="小控件设置"><i class="arr wide"></i></button>
        </div>
        <div class="sg">
            <button class="on" aria-label="注释可见性"><svg class="ic" viewBox="0 0 16 16"><use href="#person" x="-2" width="16" height="16"/><circle cx="13" cy="3" r="2" stroke="#fff"/></svg></button>
            <button aria-label="自动缩放"><svg class="ic" viewBox="0 0 16 16"><use href="#person" x="-2" width="16" height="16"/><path class="fw" d="M14 0l-4 4h3l-2 4 5-5h-3z"/></svg></button>
            <button aria-label="注释比例"><svg class="ic" viewBox="0 0 16 16"><use href="#person" width="16" height="16"/></svg></button>
            <button class="txt scale">1:1 / 100% <i class="arr wide"></i></button>
        </div>
        <div class="sg">
            <button aria-label="切换工作空间"><svg class="ic" viewBox="0 0 16 16"><circle cx="8" cy="8" r="4" stroke-width="4"/><path stroke-width="3" d="M8 0v3M8 13v3M0 8h3M13 8h3M2 2l2 2M12 12l2 2M14 2l-2 2M4 12l-2 2"/></svg></button>
            <button class="drop" aria-label="工作空间列表"><i class="arr wide"></i></button>
            <button aria-label="注释监视器"><svg class="ic" viewBox="0 0 16 16"><path stroke-width="2" d="M8 0v16M0 8h16"/></svg></button>
        </div>
        <div class="sg">
            <button aria-label="单位"><svg class="ic" viewBox="0 0 16 16"><path class="fw" d="M4 0h8v2H9v1h3v2H9v1h3v2H9v1h3v2H9v1h3v3H4z"/></svg></button>
            <div class="units"><select aria-label="图形单位"><option>小数</option></select><i class="arr wide"></i></div>
            <button aria-label="快捷特性"><svg class="ic" viewBox="0 0 16 16"><path d="M2.500.5h11v15h-11z"/><path d="M5 4h1M8 4h4M5 8h1M8 8h4M5 12h1M8 12h4" stroke-width="2"/></svg></button>
        </div>
        <div class="sg">
            <button aria-label="锁定用户界面"><svg class="ic" viewBox="0 0 16 16"><path d="M7 12H1V1h13v6M1 3h13"/><path class="fw" d="M8 10h7v6H8z"/><path d="M10 10V7h3v3"/></svg></button>
            <button class="drop" aria-label="锁定选项"><i class="arr wide"></i></button>
            <button aria-label="隔离对象"><svg class="ic" viewBox="0 0 16 16"><path d="M1 1h6v6H1zM7 10l4 5H3z"/><circle cx="13" cy="7" r="3"/></svg></button>
            <button aria-label="基线"><svg class="ic" viewBox="0 0 16 16"><path fill="#1d568e" stroke="none" d="M0 0h16v16H0z"/><path stroke="#3f8bd0" stroke-width="2" d="M3 3h6v6H3zM7 7h6v6H7z"/></svg></button>
            <button class="dim" aria-label="墙线"><svg class="ic" viewBox="0 0 16 16"><path d="M0 3.500h16M0 8.500h16M0 13.500h16"/></svg></button>
            <button class="dim" aria-label="填充"><svg class="ic" viewBox="0 0 16 16"><path stroke-width="2" stroke-dasharray="1 1" d="M0 4h16M1 6h15M0 8h16M1 10h15M0 12h16"/></svg></button>
            <button aria-label="加粗"><svg class="ic" viewBox="0 0 16 16"><path stroke="#aaa" stroke-width="2" d="M0 5h16M0 12h16"/></svg></button>
            <button class="dim" aria-label="动态标注"><svg class="ic" viewBox="0 0 16 16"><path d="M6 5h10M3 9h13M3 14h13M3 0v5M0 3h6M1 10l3-2"/></svg></button>
        </div>
        <div class="sg"><button class="on" aria-label="硬件加速"><svg class="ic" viewBox="0 0 16 16"><circle cx="8" cy="8" r="7" fill="#98b5d8" stroke="#fff"/><path stroke="#fff" stroke-width="2" d="M7 9l5-5"/></svg></button></div>
        <div class="sg roomy"><button aria-label="性能警告"><svg class="ic" viewBox="0 0 16 16"><path fill="#ddd" stroke="none" d="M0 0h13v10H0z"/><path stroke="#26588b" stroke-width="2" d="M1 7l3-4 3 4 4-4"/><path fill="#e08a3c" stroke="none" d="M11 6l5 10H6z"/><path stroke="#fff" d="M11 10v3M11 14v1"/></svg></button></div>
        <div class="sg">
            <button aria-label="全屏显示"><svg class="ic" viewBox="0 0 16 16"><path d="M.5 2.500h15v11H.5zM3 11l3-3M10 8l3-3M3 8v3h3M10 5h3v3"/></svg></button>
            <button aria-label="自定义状态栏"><svg class="ic" viewBox="0 0 16 16"><path stroke-width="2" d="M0 2h16M0 8h16M0 14h16"/></svg></button>
        </div>
    </div>
</div>

<footer class="taskbar">
    <button class="sys" aria-label="开始"><svg class="ic" viewBox="0 0 16 16"><path class="fill" d="M0 2l7-1v6H0zM8 1l8-1v7H8zM0 8h7v7l-7-1zM8 8h8v8l-8-1z"/></svg></button>
    <button class="sys" aria-label="任务视图"><svg class="ic" viewBox="0 0 16 16"><path stroke="#fff" d="M1 4h10v8H1zM1 0v2h10V0M1 16v-2h10v2M14 0v3M14 7v9" /><path class="fill" d="M13 4h3v3h-3z"/></svg></button>
    <button class="sys pin" aria-label="搜狗"><svg viewBox="0 0 22 22"><circle cx="6" cy="6" r="6"/><circle cx="16" cy="6" r="6"/><circle cx="6" cy="16" r="6"/><circle cx="16" cy="16" r="6"/><circle cx="11" cy="11" r="8"/><path d="M11 11C5 13 5 8 0 9M11 11c-2-6 3-6 1-11M11 11c6-2 6 3 11 2M11 11c2 6-3 6-1 11"/></svg></button>
    <form class="search">
        <svg viewBox="0 0 20 20"><path stroke="#1e8de0" stroke-width="4" d="M4 11h13c0-9-13-9-13 0 0 8 10 8 12 3"/><path stroke="#1e6fc6" stroke-width="2" d="M17 4c2-5-5-3-9 0M2 14c-4 7 3 5 7 3"/></svg>
        <input type="text" aria-label="搜索" value="混凝土设备">
        <button type="button">搜索一下</button>
    </form>
    <i class="handle"></i>
    <div class="tasks">
        <button><svg viewBox="0 0 24 24"><circle cx="12" cy="12" r="10" fill="#5cb82f" stroke="#d6f3bd"/><path stroke="#fff" stroke-width="3" d="M6 12h12c-1-8-12-8-12 0 0 7 9 7 11 3"/><path stroke="#6fd13c" stroke-width="2" d="M20 5c0-5-7-2-9 0M4 18c-1 6 5 4 8 2"/></svg><span>为什么叫「...</span></button>
        <button><svg viewBox="0 0 24 24"><use href="#folder"/></svg><span>TZ天正</span></button>
        <button><svg viewBox="0 0 24 24"><use href="#folder"/></svg><span>企业微信</span></button>
        <button><svg viewBox="0 0 24 24"><use href="#folder"/><path stroke="#3e8ed0" stroke-width="4" d="M13 2l4 4M18 7l4 4"/></svg><span>Camtasia St...</span></button>
        <button><svg viewBox="0 0 24 24"><path fill="#e3213b" stroke="none" d="M3 5l17-3 2 17-17 3z"/><path stroke="#fff" stroke-width="3" d="M6 8c3 0 9 8 13 7M6 16c3 0 9-8 13-7"/></svg><span>天正及CAD...</span></button>
        <button><svg viewBox="0 0 24 24"><path fill="#2b7cd3" stroke="none" d="M7 1h17v22H7z"/><path fill="#41a5ee" stroke="none" d="M7 1h17v6H7z"/><path fill="#103f91" stroke="none" d="M7 17h17v6H7z"/><path fill="#185abd" stroke="none" d="M0 6h13v13H0z"/><text x="1" y="16" font-size="11" font-weight="bold" fill="#fff">W</text></svg><span>TZ天正建筑...</span></button>
        <button><svg viewBox="0 0 24 24"><rect width="24" height="24" rx="2" fill="#47960f" stroke="none"/><path stroke="#fff" stroke-width="4" d="M20 6H9L6 9v6l3 3h11"/></svg><span>Camtasia 9</span></button>
        <button class="active"><svg viewBox="0 0 24 24"><path fill="#f3eaea" stroke="none" d="M0 0h24v24H0z"/><text class="logo-a" x="3" y="21" font-size="25">A</text></svg><span>T20天正建筑...</span></button>
        <button><svg viewBox="0 0 24 24"><rect width="24" height="24" rx="2" fill="#e8554f" stroke="none"/><path stroke="#fff" stroke-width="4" d="M20 6H9L6 9v6l3 3h11"/></svg><span>录制中...</span></button>
    </div>
    <div class="temp">69℃<br>CPU温度</div>
    <div class="tray">
        <button aria-label="显示隐藏的图标"><svg class="ic" viewBox="0 0 16 16"><path stroke="#fff" d="M2 11l6-6 6 6"/></svg></button>
        <button aria-label="麦克风"><svg class="ic" viewBox="0 0 16 16"><rect x="5" y="0" width="6" height="11" rx="1" fill="#fff" stroke="none"/><path stroke="#fff" d="M3 6v6h10V6M8 12v3M4 15.500h8"/></svg></button>
        <button aria-label="安全中心"><svg class="ic" viewBox="0 0 16 16"><path fill="#fff" stroke="#2f80dd" stroke-width="2" d="M1 2l7-1 7 1c0 7-2 11-7 13C3 13 1 9 1 2z"/><path stroke="#2f80dd" stroke-width="2" d="M4 5h8l-4 6zM8 8v4"/></svg></button>
        <button aria-label="通知"><svg class="ic" viewBox="0 0 16 16"><path class="fill" d="M8 1c4 1 4 5 4 8l3 4H1l3-4c0-3 0-7 4-8zM6 14h4l-2 2z"/></svg></button>
        <button aria-label="手写笔"><svg class="ic" viewBox="0 0 16 16"><path stroke="#fff" d="M5 10l6-9c2-2 5 0 3 2l-6 9c-1 2-4 1-3-2zM7 8c-7-1-9 6-3 6 4 0 5-3 7-6 3-4 6 0 3 4"/></svg></button>
        <button class="lang">中</button>
        <button aria-label="搜狗输入法"><svg class="ic" viewBox="0 0 16 16"><path fill="#e65120" stroke="none" d="M1 2l14-2 1 13-14 3z"/><text x="4" y="13" font-size="14" font-weight="bold" fill="#fff">S</text></svg></button>
    </div>
    <div class="clock">20:12<br>2020/3/18</div>
    <button class="notes" aria-label="1 条新通知"><svg viewBox="0 0 26 26"><path class="fill" d="M1 2h16v12H8l-3 4v-4H1z"/><path stroke="#111" d="M4 5h10M4 8h10M4 11h7"/><circle cx="17" cy="18" r="8" fill="#3c3c3c" stroke="#aaa"/><text x="14" y="23" font-size="13" fill="#fff">1</text></svg></button>
</footer>

</body>
</html>
```
FILE: styles.css
```css
* {
    box-sizing: border-box;
}
body {
    margin: 0;
    height: 100vh;
    display: flex;
    flex-direction: column;
    overflow: hidden;
    background: #5b5b5b;
    color: #f0f0f0;
    font-family: "Noto Sans", "Noto Sans CJK SC", sans-serif;
    font-size: 12px;
    line-height: 16px;
}
button, input, select {
    font: inherit;
    color: inherit;
    background: none;
    border: none;
    border-radius: 0;
    padding: 0;
    margin: 0;
    outline: none;
}
select {
    appearance: none;
}
button {
    display: flex;
    align-items: center;
    justify-content: center;
    white-space: nowrap;
}
a {
    color: inherit;
    text-decoration: none;
    white-space: nowrap;
}
h1, h2, p {
    margin: 0;
    font-size: 12px;
    font-weight: normal;
}
svg {
    display: block;
    flex: none;
    overflow: visible;
    fill: none;
    stroke: #dcdcdc;
    stroke-width: 1;
}
svg text {
    stroke: none;
    font-family: "Liberation Sans", sans-serif;
}
.defs {
    position: absolute;
}
.ic {
    width: 16px;
    height: 16px;
}
.fill { fill: #fff; stroke: none; }
.fw { fill: #dcdcdc; stroke: none; }
.fb { fill: #84c1ee; stroke: none; }
.fy { fill: #f4cd7a; stroke: none; }
.fr { fill: #ea6560; stroke: none; }
.ft { fill: #6cd0d2; stroke: none; }
.fk { fill: #262626; stroke: none; }
.green { fill: #86d6aa; stroke: none; }
.bl { stroke: #84c1ee; }
.logo-a {
    fill: #c4242c;
    font-weight: bold;
}
.letter {
    fill: #dcdcdc;
    font-weight: bold;
}
.dim {
    opacity: 0.6;
}
.faint {
    opacity: 0.3;
}

/* Small drop-down arrows */
.arr {
    flex: none;
    border: 3px solid transparent;
    border-top-color: #fff;
    border-bottom: 0;
}
.arr.wide {
    border-width: 4px 4px 0;
}
.arr.dark {
    border-top-color: #222;
    border-width: 4px 4px 0;
}
.arr.gray {
    border-top-color: #888;
}
.arr.side {
    border: 4px solid transparent;
    border-left-color: #fff;
    border-right: 0;
}

/* Title bar */
.titlebar {
    position: relative;
    flex: none;
    height: 24px;
    display: flex;
    align-items: center;
    background: #4a4a48;
    padding-left: 41px;
}
.app-button {
    position: absolute;
    left: 1px;
    top: 1px;
    z-index: 2;
    width: 40px;
    height: 40px;
    border: 1px solid #111;
    background: linear-gradient(#9a9a9a, #555);
}
.quick {
    display: flex;
    align-items: center;
    height: 22px;
    gap: 8px;
    padding: 0 0 0 9px;
    background: linear-gradient(#6c6c6c, #8b8b8b);
}
.duo {
    gap: 5px;
}
.titlebar h1 {
    flex: 1;
    text-align: center;
    color: #0c0c0c;
    white-space: nowrap;
    padding-right: 4px;
}
.titlebar h1 span {
    padding-left: 16px;
}
.help-search {
    display: flex;
    height: 22px;
}
.help-search button {
    width: 13px;
    background: linear-gradient(#777, #999);
}
.help-search input {
    width: 181px;
    padding: 0 4px;
    background: #6c6c6c;
    border: 1px solid #333;
    font-style: italic;
}
.help-search input::placeholder {
    color: #c4c4c4;
}
.account {
    display: flex;
    align-items: center;
    height: 22px;
    gap: 8px;
    padding: 0 4px;
    background: linear-gradient(#6e6e6e, #929292);
}
.account .login {
    width: 114px;
    justify-content: flex-start;
    gap: 5px;
}
.login .arr {
    margin-left: auto;
}
.account .help {
    margin-left: 12px;
}
.window-buttons {
    display: flex;
    gap: 30px;
    padding: 0 17px 0 40px;
}
.ime {
    position: absolute;
    right: 223px;
    top: 21px;
    z-index: 2;
    height: 24px;
    display: flex;
    align-items: center;
    gap: 9px;
    padding: 0 7px 0 6px;
    border-radius: 4px;
    background: #303030;
    color: #ccc;
    font-size: 17px;
}
.ime b {
    color: #2a9fd8;
    font-size: 24px;
    font-weight: 500;
}

/* Menus and tabs */
.menubar {
    flex: none;
    height: 22px;
    display: flex;
    align-items: center;
    gap: 25px;
    padding-left: 55px;
    background: linear-gradient(#484848 1px, #a0a0a0 2px, #585858);
    border-bottom: 1px solid #333;
}
.doc-buttons {
    display: flex;
    gap: 1px;
    margin-left: auto;
    padding-right: 2px;
}
.tabs {
    flex: none;
    height: 21px;
    display: flex;
    align-items: flex-end;
    gap: 4px;
    padding-left: 4px;
    background: #515151;
    color: #d2d2d2;
    border-bottom: 1px solid #353535;
}
.tabs a {
    height: 18px;
    padding: 0 8px;
    line-height: 18px;
}
.tabs .active {
    color: #fff;
    background: linear-gradient(#6e6e6e, #5b5b5b);
    border-left: 1px solid #333;
    border-right: 1px solid #333;
}
.minimize {
    height: 18px;
    gap: 4px;
    margin-left: 20px;
}

/* Ribbon */
.ribbon {
    flex: none;
    display: flex;
    background: #5b5b5b;
    border-bottom: 3px solid #5f5f5f;
    padding-left: 1px;
}
.panel {
    flex: none;
    border-right: 1px solid #3c3c3c;
    background: linear-gradient(#5d5d5d, #585858);
}
.panel-body {
    height: 79px;
    display: flex;
}
.panel h2 {
    position: relative;
    height: 18px;
    display: flex;
    align-items: center;
    justify-content: center;
    gap: 8px;
    background: linear-gradient(#4c4c4c, #575757);
    border-bottom: 1px solid #333;
}
.launcher {
    position: absolute;
    right: 4px;
    top: 6px;
    width: 8px;
    height: 8px;
}
.big {
    width: 40px;
    flex-direction: column;
    justify-content: flex-start;
    gap: 4px;
    padding-top: 6px;
}
.big svg {
    width: 32px;
    height: 32px;
}
.big span {
    line-height: 17px;
}
.big .arr {
    margin-top: -2px;
}
.stack {
    display: grid;
    grid-auto-rows: 24px;
    align-content: start;
    align-items: center;
    padding-top: 4px;
}
.cmd {
    justify-content: flex-start;
    gap: 5px;
}
.cmd .arr {
    margin-left: auto;
}
.tool {
    width: 24px;
    height: 22px;
}
.tool.on {
    background: #5475a8;
    border: 1px solid #2f4468;
}
.draw .panel-body { padding: 0 5px 0 2px; }
.draw .stack { width: 34px; margin-left: 9px; }
.modify .panel-body { padding: 0 9px 0 7px; }
.modify .stack { width: 60px; }
.modify .stack:nth-child(3) { width: 74px; padding-right: 12px; }
.modify .stack:nth-child(4) { width: 16px; }
.modify .array { padding-right: 4px; }
.annotate .panel-body { padding: 0 6px 0 5px; }
.annotate .stack { width: 58px; margin-left: 4px; }
.annotate .big + .big { width: 42px; }
.layer .panel-body { padding: 0 3px 0 0; }
.block .stack { width: 82px; margin: 0 6px 0 5px; }
.props .big { width: 42px; }
.props .icons { width: 19px; padding-left: 1px; }
.props .combos { width: 180px; margin-right: 2px; }
.group .stack { margin-right: 3px; }
.utils .panel-body { padding: 0 3px 0 4px; }
.utils .stack { margin-left: 4px; }
.clip .panel-body { padding: 0 2px 0 5px; }
.clip .stack { margin-left: 4px; }
.view .panel-body { padding: 0 9px 0 9px; }
.view h2 { padding-right: 14px; }
.layer-tools {
    width: 207px;
    padding-top: 4px;
}
.combo {
    height: 22px;
    display: flex;
    align-items: center;
    gap: 8px;
    padding: 0 2px 0 4px;
    border: 1px solid #333;
    background: linear-gradient(#6c6c6c, #555);
}
.combo select {
    flex: 1;
}
.layer-tools .combo {
    gap: 5px;
    padding-left: 3px;
}
.layer-tools .swatch {
    width: 14px;
    height: 14px;
    border: 1px solid #111;
}
.swatch {
    width: 16px;
    height: 16px;
    background: #fff;
}
.combo.color {
    gap: 10px;
    padding-left: 12px;
}
.rule {
    width: 64px;
    border-top: 1px solid #fff;
    margin: 0 -6px 0 -1px;
}
.layer-row {
    height: 24px;
    display: flex;
    align-items: center;
    gap: 8px;
    padding-left: 4px;
}
.layer-tools .combo + .layer-row {
    margin-top: 2px;
}
.color-wheel {
    width: 16px;
    height: 16px;
    border-radius: 8px;
    background: conic-gradient(#f0c33c 0 60deg, #f08a3c 0 120deg, #7a55e0 0 200deg, #3c86e8 0 250deg, #35b56c 0 310deg, #e8644f 0);
}
.ribbon-rest {
    flex: 1;
    position: relative;
    display: flex;
    align-items: flex-start;
    background: linear-gradient(#525252, #383838);
    border-bottom: 1px solid #2c2c2c;
    padding: 4px 0 0 14px;
}
.align-bar {
    display: flex;
    height: 23px;
    gap: 7px;
    padding-left: 2px;
    background: #5a5a5a;
    border: 1px solid #333;
}
.align-bar .sep {
    border-left: 1px solid #999;
    padding-left: 5px;
}
.align-bar .close {
    width: 8px;
    align-items: flex-start;
    line-height: 11px;
    background: #666;
}
.grip {
    width: 4px;
    margin: 4px 0;
    background: repeating-linear-gradient(#222 0 1px, #5a5a5a 1px 2px);
}
.s-logo {
    position: absolute;
    right: 60px;
    top: 41px;
    width: 32px;
    height: 32px;
}

/* Workspace */
.workspace {
    flex: 1;
    display: flex;
    min-height: 0;
}
.palette {
    width: 105px;
    display: flex;
    flex-direction: column;
    padding: 0 2px 3px 0;
    background: #626262;
}
.palette h2 {
    height: 29px;
    padding: 4px 15px;
    background: #4d4d4d;
    border-bottom: 4px solid #636363;
}
.menu-list {
    flex: 1;
    padding-top: 2px;
    background: #f0f0f0;
    color: #111;
}
.menu-list a {
    height: 18px;
    display: flex;
    align-items: center;
    gap: 9px;
    padding-left: 3px;
}
.menu-list .after-open {
    margin-top: 3px;
}
.menu-list .open {
    height: 19px;
    border-bottom: 1px solid #666;
}
.menu-list hr {
    margin: 2px 0 3px 3px;
    border: none;
    border-top: 1px solid #999;
}
.menu-list .light {
    margin: 1px 0 2px;
    border-color: #fff;
}
.tri {
    width: 11px;
    margin-left: 5px;
    border: 5px solid transparent;
    border-left-color: #34628f;
    border-right-width: 0;
}
.tri.down {
    width: 10px;
    margin: 0 3px;
    border: 5px solid transparent;
    border-top-color: #34628f;
    border-bottom: 0;
}
.tri.green {
    border-left-color: #168068;
}
main {
    flex: 1;
    min-width: 0;
    display: flex;
    flex-direction: column;
}
.canvas {
    flex: 1;
    position: relative;
    overflow: hidden;
    background: #000;
}
.view-label {
    padding: 6px 4px;
}
.cross-v, .cross-h, .pickbox {
    position: absolute;
    background: #f0f0f0;
}
.cross-v { left: 679px; top: 0; bottom: 0; width: 1px; }
.cross-h { left: 0; right: 0; top: 203px; height: 1px; }
.pickbox {
    left: 671px;
    top: 195px;
    width: 17px;
    height: 17px;
    background: #000;
    border: 1px solid #fff;
}
.ucs {
    position: absolute;
    left: 4px;
    bottom: 11px;
    stroke: #eee;
}
.ucs text {
    fill: #eee;
    font-family: "Open Sans", sans-serif;
    font-weight: 300;
}
.viewcube {
    position: absolute;
    right: 14px;
    top: 13px;
    width: 138px;
    height: 138px;
    display: grid;
    grid-template-columns: 24px 1fr 24px;
    grid-template-rows: 24px 1fr 24px;
    place-items: center;
    color: #b0b0b0;
    font-size: 18px;
    line-height: 20px;
}
.ring {
    position: absolute;
    inset: 9px;
    border: 13px solid #2d2d2d;
    border-radius: 50%;
}
.viewcube span {
    position: relative;
    font-weight: 500;
}
.north, .south { grid-column: 2; }
.north { grid-row: 1; }
.west { grid-row: 2; grid-column: 1; }
.east { grid-row: 2; grid-column: 3; }
.south { grid-row: 3; }
.viewcube b {
    grid-row: 2;
    grid-column: 2;
    width: 52px;
    height: 52px;
    background: #a4a4a4;
    border: 1px solid #888;
    color: #44464c;
    font-size: 30px;
    font-weight: 300;
    line-height: 48px;
    text-align: center;
}
.ucs-name {
    position: absolute;
    right: 54px;
    top: 170px;
    width: 58px;
    height: 18px;
    gap: 4px;
    border-radius: 4px;
    background: #777783;
    color: #44444e;
    font-size: 11px;
}
.ucs-name i {
    color: #bbb;
    font-style: normal;
    font-size: 9px;
}
.navbar {
    position: absolute;
    right: 4px;
    top: 212px;
    border-radius: 4px;
    background: #4a4a4a;
}
.navbar svg {
    width: 32px;
    height: 212px;
    stroke: #262626;
}

/* Command line */
.command {
    flex: none;
    display: flex;
    border: 1px solid #777;
    border-width: 3px 0 1px 1px;
}
.command-side {
    width: 22px;
    display: flex;
    flex-direction: column;
    align-items: center;
    gap: 5px;
    padding-top: 3px;
    background: linear-gradient(#858585, #3c3c3c);
}
.dots {
    width: 18px;
    height: 5px;
    background: repeating-linear-gradient(90deg, #bbb 0 2px, #777 2px 3px);
}
.command-main {
    flex: 1;
}
.command-main p {
    height: 38px;
    padding: 7px 2px 0;
    line-height: 15px;
    background: #c8c8c8;
    border-bottom: 1px solid #777;
    color: #111;
    font-family: "Liberation Mono", "Noto Sans CJK SC", monospace;
}
.command-line {
    height: 22px;
    display: flex;
    align-items: center;
    padding-left: 4px;
    background: #fff;
}
.command-line button {
    gap: 4px;
}
.command-line input {
    flex: 1;
    margin-left: 7px;
    color: #111;
    font-size: 13px;
    font-style: italic;
}
.command-line input::placeholder {
    color: #8c8c8c;
}

/* Layout tabs and status bar */
.bottom-bar {
    flex: none;
    height: 30px;
    display: flex;
    justify-content: space-between;
    background: #343434;
}
.layouts {
    display: flex;
    gap: 2px;
    padding: 2px 0 0 10px;
}
.layouts button {
    width: 50px;
    height: 18px;
    color: #a8a8a8;
    background: #4c4c4c;
    clip-path: polygon(0 0, 100% 0, 94% 60%, 86% 100%, 14% 100%, 6% 60%);
}
.layouts .active {
    color: #fff;
    font-weight: bold;
    background: linear-gradient(#555, #808080);
}
.layouts .plus {
    width: 30px;
    font-size: 16px;
    font-weight: bold;
}
.status {
    display: flex;
    gap: 3px;
    padding: 2px 1px;
    background: #444;
}
.sg {
    display: flex;
    align-items: center;
    background: #4d4d4d;
    outline: 1px solid #777;
}
.sg button {
    width: 24px;
    height: 24px;
    color: #dcdcdc;
}
.sg .on {
    width: 22px;
    margin: 0 1px;
    height: 22px;
    color: #fff;
    background: #5c8ac0;
}
.sg .drop {
    width: 15px;
}
.sg .txt {
    width: auto;
    gap: 3px;
    padding: 0 2px;
    color: #fff;
}
.sg .plot {
    width: 70px;
    padding: 0;
}
.sg .scale {
    width: 72px;
    padding: 0;
}
.sg.roomy {
    padding: 0 3px;
}
.coords {
    width: 140px;
    padding-right: 5px;
    text-align: right;
    line-height: 26px;
    border-left: 1px solid #777;
}
.units {
    width: 72px;
    display: flex;
    align-items: center;
    padding: 0 5px 0 4px;
}
.units select {
    flex: 1;
}

/* Taskbar */
.taskbar {
    flex: none;
    height: 40px;
    display: flex;
    align-items: center;
    background: #101010;
    padding-right: 4px;
    color: #fff;
}
.sys {
    flex: none;
    width: 48px;
    height: 40px;
}
.pin svg {
    width: 22px;
    height: 22px;
    margin-left: 4px;
    fill: #e4e4e4;
    stroke: none;
}
.pin path {
    stroke: #101010;
    fill: none;
}
.search {
    display: flex;
    align-items: center;
    height: 34px;
    margin-left: 4px;
    padding-left: 3px;
    background: #efefef;
}
.search svg {
    width: 20px;
    height: 20px;
}
.search input {
    width: 136px;
    padding-left: 3px;
    color: #111;
}
.search button {
    width: 56px;
    height: 34px;
    background: #2788fb;
    color: #fff;
}
.handle {
    flex: none;
    width: 4px;
    height: 16px;
    margin: 0 17px 0 8px;
    border: 1px solid #444;
    border-width: 0 1px;
}
.tasks {
    flex: 1;
    min-width: 0;
    display: flex;
    gap: 8px;
}
.tasks button {
    flex: none;
    width: 118px;
    height: 40px;
    justify-content: flex-start;
    gap: 4px;
    padding-left: 5px;
    border-bottom: 2px solid #aaa;
}
.tasks svg {
    width: 24px;
    height: 24px;
}
.tasks .active {
    width: 126px;
    margin: 0 -4px;
    padding-left: 9px;
    background: #333;
}
.temp, .clock {
    text-align: center;
    line-height: 18px;
}
.tray {
    display: flex;
    gap: 10px;
    padding: 0 17px 0 18px;
}
.tray button {
    width: 16px;
}
.notes {
    width: 56px;
    height: 40px;
    border-right: 1px solid #666;
}
.notes svg {
    width: 26px;
    height: 26px;
}
```
